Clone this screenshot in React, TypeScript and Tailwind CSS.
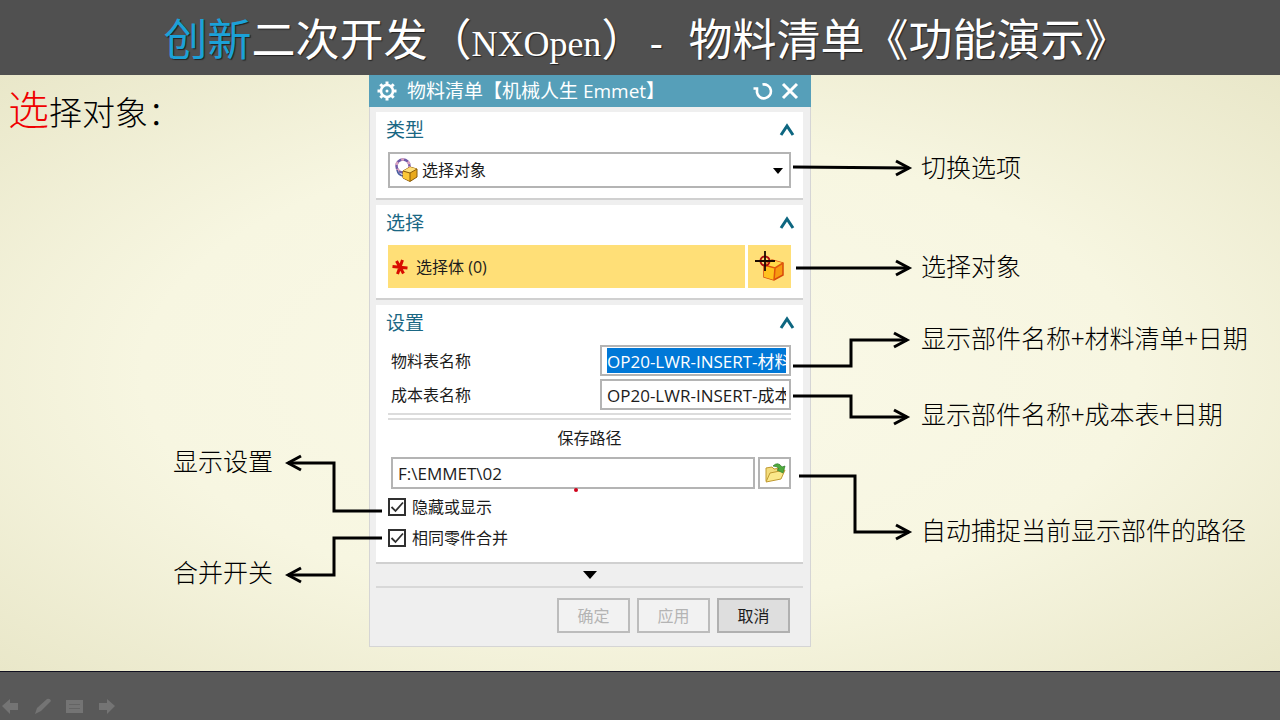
import React, { useState } from 'react';

const rightNotes = [
  { text: '切换选项', gap: 'mt-[73px]' },
  { text: '选择对象', gap: 'mt-[63px]' },
  { text: '显示部件名称+材料清单+日期', gap: 'mt-9' },
  { text: '显示部件名称+成本表+日期', gap: 'mt-10' },
  { text: '自动捕捉当前显示部件的路径', gap: 'mt-20' },
];

export default function App() {
  return (
    <div className="min-h-screen flex flex-col font-['Noto_Sans_CJK_SC',sans-serif] text-black">
      <header className="h-[75px] bg-[#505050] flex items-center justify-center pl-3">
        <h1 className="text-[44px] leading-[60px] text-white whitespace-pre pt-2 [text-shadow:1px_1px_1px_#222]">
          <span className="text-[#1ba1d8]">创新</span>二次开发（
          <span className="text-[36px] font-['Liberation_Serif',serif]">NXOpen</span>）
          <span className="text-[36px] font-['Liberation_Mono',monospace]">- </span>
          物料清单《功能演示》
        </h1>
      </header>

      <main className="flex-1 grid grid-cols-[minmax(0,369fr)_442px_minmax(0,469fr)] items-start bg-[radial-gradient(ellipse_at_center,#faf9e8_0%,#f7f6e1_55%,#e9e7c9_100%)]">
        <section className="whitespace-nowrap">
          <h2 className="pl-2 h-16 text-[33px] leading-[64px] font-light">
            <span className="text-[41px] text-[#f00000]">选</span>择对象：
          </h2>
          <div className="mt-[303px] pr-24 flex flex-col gap-[75px] items-end text-[25px] leading-9 font-light">
            <p>显示设置</p>
            <p>合并开关</p>
          </div>
        </section>

        <div className="relative">
          <Dialog />
          <Connectors />
        </div>

        <section className="pl-[110px] text-[25px] leading-9 font-light whitespace-nowrap">
          {rightNotes.map((note) => (
            <p key={note.text} className={note.gap}>{note.text}</p>
          ))}
        </section>
      </main>

      <footer className="h-[49px] bg-[#595959] border-t border-[#101020] flex items-end gap-3 pb-1 pl-0.5 text-[#747474]">
        <button aria-label="上一页" className="w-5 h-5">
          <svg viewBox="0 0 20 20" fill="currentColor"><path d="M0 10 8 3v4h8v7H8v4z" /></svg>
        </button>
        <button aria-label="画笔" className="w-5 h-5">
          <svg viewBox="0 0 20 20" fill="currentColor"><path d="M1 18l2-6L13 3q3-1 4 2L7 15z" /></svg>
        </button>
        <button aria-label="菜单" className="w-5 h-5">
          <svg viewBox="0 0 20 20">
            <path d="M0 4h17v13H0z" fill="currentColor" />
            <path d="M3 8.500h11M3 12.500h11" stroke="#646464" strokeWidth="1" />
          </svg>
        </button>
        <button aria-label="下一页" className="w-5 h-5">
          <svg viewBox="0 0 20 20" fill="currentColor"><path d="M17 10 9 3v4H1v7h8v4z" /></svg>
        </button>
      </footer>
    </div>
  );
}

function Dialog() {
  const [type, setType] = useState('选择对象');
  const [materialName, setMaterialName] = useState('OP20-LWR-INSERT-材料清单');
  const [costName, setCostName] = useState('OP20-LWR-INSERT-成本表');
  const [path, setPath] = useState('F:\\EMMET\\02');
  const [visible, setVisible] = useState(true);
  const [merge, setMerge] = useState(true);

  return (
    <div className="bg-[#efefef] border-x border-b border-[#d5d5d5] text-base leading-6 text-[#1c1c1c] font-['Open_Sans','Noto_Sans_CJK_SC',sans-serif]">
      <div className="h-8 -mx-px bg-[#569fb9] text-white flex items-center px-2">
        <GearIcon />
        <h3 className="ml-2.5 flex-1 text-[19px] whitespace-nowrap">物料清单【机械人生 Emmet】</h3>
        <button aria-label="重置" className="mr-2">
          <svg width="20" height="20" viewBox="0 0 20 20" fill="none" stroke="currentColor" strokeWidth="2.600">
            <path d="M9.500 3.500a7 7 0 1 1-5.500 8V7.500H0.500" />
          </svg>
        </button>
        <button aria-label="关闭" className="mr-1">
          <svg width="18" height="18" viewBox="0 0 18 18" stroke="currentColor" strokeWidth="3">
            <path d="M2 2l14 14M16 2 2 16" />
          </svg>
        </button>
      </div>

      <div className="pl-1.5 pr-[7px] pt-[5px] flex flex-col gap-[5px]">
        <Panel title="类型">
          <div className="relative mt-1.5 mb-2.5">
            <select
              aria-label="类型"
              value={type}
              onChange={(e) => setType(e.target.value)}
              className="block w-full h-9 appearance-none bg-white border-2 border-[#b4b4b4] pl-8 leading-6"
            >
              <option>选择对象</option>
            </select>
            <TypeIcon />
            <svg className="absolute right-2 top-4 pointer-events-none" width="10" height="6" viewBox="0 0 10 6"><path d="M0 0h10L5 6z" /></svg>
          </div>
        </Panel>

        <Panel title="选择">
          <div className="flex gap-[3px] mt-1.5 mb-2.5">
            <div className="flex-1 h-[43px] bg-[#ffdf77] flex items-center pl-1">
              <svg width="16" height="16" viewBox="0 0 16 16" stroke="#d80c00" strokeWidth="3">
                <path d="M10.500 1 5.500 15M0.500 7.500l15 1.500M4.500 2l7 12.500" />
              </svg>
              <span className="ml-2">选择体 (0)</span>
            </div>
            <button aria-label="选择体" className="w-[43px] h-[43px] bg-[#ffdf77] flex items-center justify-center">
              <PickIcon />
            </button>
          </div>
        </Panel>

        <Panel title="设置">
          <div className="pl-[3px] mt-1.5 flex flex-col gap-[3px]">
            <div className="flex items-center">
              <label htmlFor="material" className="flex-1">物料表名称</label>
              <div className="w-[191px] h-[31px] border-2 border-[#b4b4b4] bg-white pl-[5px] pr-[3px] py-px">
                <input
                  id="material"
                  value={materialName}
                  onChange={(e) => setMaterialName(e.target.value)}
                  className="block w-full h-[25px] text-[17px] bg-[#0078d7] text-white outline-none"
                />
              </div>
            </div>
            <div className="flex items-center">
              <label htmlFor="cost" className="flex-1">成本表名称</label>
              <div className="w-[191px] h-[31px] border-2 border-[#b4b4b4] bg-white pl-[5px] pr-[3px] py-px">
                <input
                  id="cost"
                  value={costName}
                  onChange={(e) => setCostName(e.target.value)}
                  className="block w-full h-[25px] text-[17px] outline-none"
                />
              </div>
            </div>
          </div>
          <div className="mt-[3px] h-[7px] border-y-2 border-[#dcdcdc]" />
          <label htmlFor="path" className="block text-center mt-1.5 leading-6">保存路径</label>
          <div className="pl-[3px] mt-[7px] flex gap-[3px]">
            <input
              id="path"
              value={path}
              onChange={(e) => setPath(e.target.value)}
              className="flex-1 min-w-0 h-8 border-2 border-[#b4b4b4] bg-white px-[5px] text-[17px] outline-none"
            />
            <button aria-label="浏览" className="w-[33px] h-8 border-2 border-[#b4b4b4] bg-white flex items-center justify-center">
              <FolderIcon />
            </button>
          </div>
          <div className="mt-1.5 mb-3 flex flex-col gap-[7px]">
            <Check label="隐藏或显示" checked={visible} onChange={setVisible} />
            <Check label="相同零件合并" checked={merge} onChange={setMerge} />
          </div>
        </Panel>
      </div>

      <div className="ml-1.5 mr-[7px] h-6 border-b-2 border-[#d8d8d8] flex items-center justify-center">
        <button aria-label="更多">
          <svg width="14" height="8" viewBox="0 0 14 8"><path d="M0 0h14L7 8z" /></svg>
        </button>
      </div>
      <div className="flex justify-end gap-[7px] pt-2.5 pb-[13px] pr-5">
        <button disabled className="w-[73px] h-[35px] border-2 border-[#bcbcbc] bg-[#f2f2f2] text-[#b4b4b4]">确定</button>
        <button disabled className="w-[73px] h-[35px] border-2 border-[#bcbcbc] bg-[#f2f2f2] text-[#b4b4b4]">应用</button>
        <button className="w-[73px] h-[35px] border-2 border-[#b0b0b0] bg-[#dedede]">取消</button>
      </div>
    </div>
  );
}

function Panel({ title, children }: { title: string; children: React.ReactNode }) {
  return (
    <section className="bg-white border-b-2 border-[#d0d0d0] px-3 pt-0.5">
      <div className="flex items-center justify-between h-8 -ml-0.5 -mr-1">
        <h4 className="text-[19px] text-[#1a6784]">{title}</h4>
        <button aria-label={`收起${title}`}>
          <svg width="16" height="14" viewBox="0 0 16 14" fill="none" stroke="#0d6680" strokeWidth="3">
            <path d="M2 12 8 3l6 9" />
          </svg>
        </button>
      </div>
      {children}
    </section>
  );
}

function Check({ label, checked, onChange }: { label: string; checked: boolean; onChange: (v: boolean) => void }) {
  return (
    <label className="relative flex items-center h-6">
      <input
        type="checkbox"
        checked={checked}
        onChange={(e) => onChange(e.target.checked)}
        className="peer appearance-none w-[18px] h-[18px] border-2 border-[#303030] bg-white"
      />
      <svg className="absolute left-0 top-[3px] hidden peer-checked:block pointer-events-none" width="18" height="18" viewBox="0 0 18 18" fill="none" stroke="#303030" strokeWidth="1.800">
        <path d="M3.500 9 7.500 13 15 4.500" />
      </svg>
      <span className="ml-1.5">{label}</span>
    </label>
  );
}

/* Lines that tie the notes on both sides to the dialog controls */
function Connectors() {
  return (
    <>
      <svg className="absolute -left-[84px] top-[375px] pointer-events-none" width="100" height="140" viewBox="285 450 100 140" fill="none" stroke="#000" strokeWidth="3">
        <path d="M382 511H334V463H288" />
        <path d="M301 456 288 463l13 7" />
        <path d="M382 538H334V575H288" />
        <path d="M301 568 288 575l13 7" />
      </svg>
      <svg className="absolute left-[421px] top-[75px] pointer-events-none" width="124" height="400" viewBox="790 150 124 400" fill="none" stroke="#000" strokeWidth="3">
        <path d="M793 167 909 168" />
        <path d="M896 161 909 168l-13 7" />
        <path d="M796 268H909" />
        <path d="M896 261 909 268l-13 7" />
        <path d="M793 366H851V340H907" />
        <path d="M894 333 907 340l-13 7" />
        <path d="M793 396H851V417H907" />
        <path d="M894 410 907 417l-13 7" />
        <path d="M799 476H855V532H909" />
        <path d="M896 525 909 532l-13 7" />
      </svg>
      <span className="absolute left-[205px] top-[413px] w-1 h-1 rounded-full bg-[#d0021b]" />
    </>
  );
}

function GearIcon() {
  return (
    <svg width="20" height="20" viewBox="0 0 20 20" fill="none" stroke="currentColor">
      <circle cx="10" cy="10" r="6" strokeWidth="2.600" />
      <circle cx="10" cy="10" r="1.500" fill="currentColor" stroke="none" />
      <path d="M10 0.500v3M10 16.500v3M0.500 10h3M16.500 10h3M3.300 3.300l2 2M14.700 14.700l2 2M3.300 16.700l2-2M14.700 5.300l2-2" strokeWidth="3" />
    </svg>
  );
}

function TypeIcon() {
  return (
    <svg className="absolute left-1.5 top-1.5 pointer-events-none" width="24" height="24" viewBox="0 0 24 24" fill="none">
      <circle cx="9" cy="8" r="6.500" stroke="#6f5aa8" strokeWidth="2.500" />
      <circle cx="9" cy="8" r="6.500" stroke="#d9a0c0" strokeWidth="2.500" strokeDasharray="3 4" />
      <path d="M3 12q1 5 6 6" stroke="#4a5fa0" strokeWidth="1.500" />
      <path d="M9 13l7-4 7 2v8l-7 4.500-7-3.500z" fill="#e9a91c" stroke="#8a5a08" />
      <path d="M9 13l7-4 7 2-7 4z" fill="#ffe07a" />
      <path d="M9 13l7 2v8l-7-3z" fill="#fcc738" />
      <path d="M9 13l7 2 7-4M16 15v8" stroke="#8a5a08" />
    </svg>
  );
}

function PickIcon() {
  return (
    <svg width="30" height="32" viewBox="0 0 30 32" fill="none">
      <path d="M9 14l8-5 11 3v12l-9 5-10-3z" fill="#f79a10" stroke="#d8480a" strokeWidth="1.500" />
      <path d="M9 14l8-5 11 3-8 5z" fill="#ffd94a" />
      <path d="M9 14l11 3-1 12-10-3z" fill="#ffc21e" />
      <path d="M9 14l11 3 8-5M20 17l-1 12" stroke="#e0560c" strokeWidth="1.500" />
      <circle cx="10" cy="10" r="4.500" stroke="#b01010" strokeWidth="2" />
      <path d="M10 0v20M0 10h20" stroke="#1a0a00" strokeWidth="1.800" />
    </svg>
  );
}

function FolderIcon() {
  return (
    <svg width="22" height="22" viewBox="0 0 22 22" fill="none">
      <path d="M2 19V6l6-1 2 2 8-1v5" fill="#f3dc7c" stroke="#c09a30" />
      <path d="M2 20 6 11l15-3-4 9z" fill="#fbe88a" stroke="#c09a30" />
      <path d="M9 4q5-5 9 1l3-1-2 7-6-3 2-1q-2-3-6-3z" fill="#4faa3c" stroke="#2f7d2a" strokeWidth="0.700" />
    </svg>
  );
}
